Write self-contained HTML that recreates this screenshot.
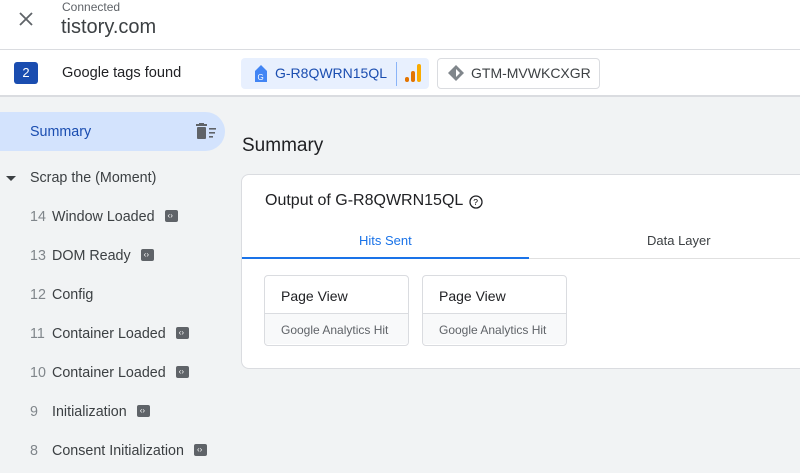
<html><head><style>
body{margin:0;width:800px;height:473px;overflow:hidden;background:#f1f3f4;font-family:"Liberation Sans",sans-serif;position:relative;color:#202124}
.a{position:absolute;white-space:nowrap}
.ic{display:inline-block;width:13px;height:12px;background:#5f6368;border-radius:2px;vertical-align:-1px;margin-left:10px;position:relative}
.ic:after{content:"‹›";color:#fff;font-size:8px;position:absolute;left:3px;top:0;line-height:12px}
.it{position:absolute;left:0;font-size:14.3px;color:#3c4043}
.it .n{position:absolute;left:30px;color:#80868b}
.it .l{position:absolute;left:52px;white-space:nowrap}
</style></head><body>
<div class="a" style="left:0;top:0;width:800px;height:49px;background:#fff;border-bottom:1px solid #dadce0"></div>
<svg class="a" style="left:18px;top:11px" width="16" height="16"><path d="M2 2L14 14M14 2L2 14" stroke="#5f6368" stroke-width="1.8"/></svg>
<div class="a" style="left:62px;top:0;font-size:12px;color:#5f6368">Connected</div>
<div class="a" style="left:61px;top:16px;font-size:20px;color:#3c4043">tistory.com</div>
<div class="a" style="left:0;top:50px;width:800px;height:45px;background:#fff;border-bottom:2px solid #dadce0"></div>
<div class="a" style="left:14px;top:62px;width:24px;height:22px;background:#1a4db0;border-radius:3px;color:#fff;font-size:13px;text-align:center;line-height:22px">2</div>
<div class="a" style="left:62px;top:65px;font-size:14.6px">Google tags found</div>
<div class="a" style="left:241px;top:58px;width:188px;height:31px;background:#e8f0fe;border-radius:4px"></div>
<svg class="a" style="left:254px;top:64px" width="14" height="19"><path d="M7 1L13 7V18H1V7Z" fill="#4285f4"/><text x="3.5" y="16" font-size="8" fill="#fff" font-family="Liberation Sans">G</text></svg>
<div class="a" style="left:275px;top:65px;font-size:14px;color:#1a4db0">G-R8QWRN15QL</div>
<div class="a" style="left:396px;top:62px;width:1px;height:24px;background:#8ab4f8"></div>
<svg class="a" style="left:404px;top:63px" width="18" height="20"><rect x="1" y="14" width="4" height="5" rx="2" fill="#e37400"/><rect x="7" y="8" width="4" height="11" rx="2" fill="#e37400"/><rect x="13" y="1" width="4" height="18" rx="2" fill="#f9ab00"/></svg>
<div class="a" style="left:437px;top:58px;width:161px;height:29px;background:#fff;border:1px solid #dadce0;border-radius:4px"></div>
<svg class="a" style="left:447px;top:64px" width="18" height="18"><path d="M9 1L17 9L9 17L1 9Z" fill="#80868b"/><path d="M9 5L13 9L9 13" fill="#fff"/></svg>
<div class="a" style="left:471px;top:65px;font-size:14px;color:#3c4043">GTM-MVWKCXGR</div>
<div class="a" style="left:0;top:112px;width:225px;height:39px;background:#d3e3fd;border-radius:0 20px 20px 0"></div>
<div class="a" style="left:30px;top:124px;font-size:14.3px;color:#1a4db0">Summary</div>
<svg class="a" style="left:195px;top:123px" width="22" height="17"><rect x="1" y="1" width="11" height="2" fill="#5f6368"/><rect x="4" y="0" width="5" height="2" fill="#5f6368"/><rect x="2" y="4" width="9" height="12" rx="1" fill="#5f6368"/><rect x="14" y="5" width="7" height="1.6" fill="#5f6368"/><rect x="14" y="9" width="6" height="1.6" fill="#5f6368"/><rect x="14" y="13" width="4" height="1.6" fill="#5f6368"/></svg>
<div class="a" style="left:242px;top:135px;font-size:19px">Summary</div>
<svg class="a" style="left:6px;top:175px" width="10" height="8"><path d="M0 1H10L5 6Z" fill="#3c4043"/></svg>
<div class="a" style="left:30px;top:170px;font-size:14.3px;color:#3c4043">Scrap the (Moment)</div>
<div class="it" style="top:209px"><span class="n">14</span><span class="l">Window Loaded<span class="ic"></span></span></div>
<div class="it" style="top:248px"><span class="n">13</span><span class="l">DOM Ready<span class="ic"></span></span></div>
<div class="it" style="top:287px"><span class="n">12</span><span class="l">Config</span></div>
<div class="it" style="top:326px"><span class="n">11</span><span class="l">Container Loaded<span class="ic"></span></span></div>
<div class="it" style="top:365px"><span class="n">10</span><span class="l">Container Loaded<span class="ic"></span></span></div>
<div class="it" style="top:404px"><span class="n">9</span><span class="l">Initialization<span class="ic"></span></span></div>
<div class="it" style="top:443px"><span class="n">8</span><span class="l">Consent Initialization<span class="ic"></span></span></div>
<div class="a" style="left:241px;top:174px;width:570px;height:193px;background:#fff;border:1px solid #dadce0;border-radius:8px"></div>
<div class="a" style="left:265px;top:192px;font-size:16px">Output of G-R8QWRN15QL</div>
<svg class="a" style="left:468px;top:194px" width="16" height="16"><circle cx="8" cy="8" r="6" fill="none" stroke="#202124" stroke-width="1.3"/><text x="5.2" y="11" font-size="8.5" font-family="Liberation Sans">?</text></svg>
<div class="a" style="left:359px;top:233px;font-size:13px;color:#1a73e8">Hits Sent</div>
<div class="a" style="left:647px;top:233px;font-size:13px;color:#3c4043">Data Layer</div>
<div class="a" style="left:242px;top:258px;width:558px;height:1px;background:#e0e0e0"></div>
<div class="a" style="left:242px;top:257px;width:287px;height:2px;background:#1a73e8"></div>
<div class="a" style="left:264px;top:275px;width:143px;height:69px;border:1px solid #dadce0;border-radius:4px;overflow:hidden"><div style="height:38px;border-bottom:1px solid #dadce0;font-size:14px;padding:12px 0 0 16px;box-sizing:border-box">Page View</div><div style="background:#f8f9fa;height:30px;font-size:12px;color:#5f6368;padding:9px 0 0 16px;box-sizing:border-box">Google Analytics Hit</div></div>
<div class="a" style="left:422px;top:275px;width:143px;height:69px;border:1px solid #dadce0;border-radius:4px;overflow:hidden"><div style="height:38px;border-bottom:1px solid #dadce0;font-size:14px;padding:12px 0 0 16px;box-sizing:border-box">Page View</div><div style="background:#f8f9fa;height:30px;font-size:12px;color:#5f6368;padding:9px 0 0 16px;box-sizing:border-box">Google Analytics Hit</div></div>
</body></html>
